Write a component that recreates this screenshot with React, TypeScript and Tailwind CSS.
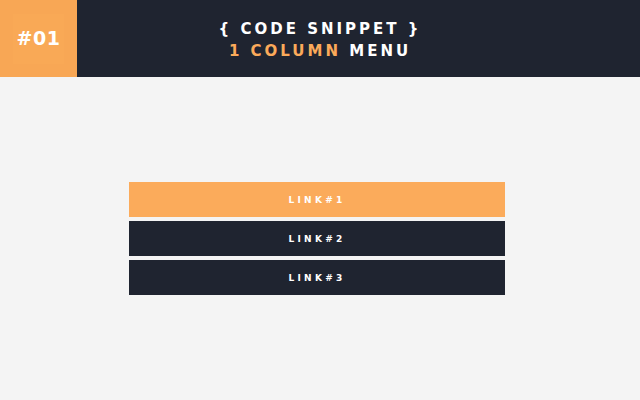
export default function App() {
  const links = ["LINK#1", "LINK#2", "LINK#3"];
  return (
    <div
      className="w-[640px] h-[400px] bg-[#f4f4f4] flex flex-col"
      style={{ fontFamily: '"DejaVu Sans", Verdana, sans-serif' }}
    >
      <header className="h-[77px] bg-[#1f2430] flex">
        <div className="w-[77px] h-[77px] bg-[#f8a755] flex items-center justify-center">
          <div className="w-[51px] h-[50px] bg-[#f9a956] flex items-center justify-center">
            <span className="text-white font-bold text-[19px] tracking-[0.5px]">#01</span>
          </div>
        </div>
        <div className="flex-1 flex flex-col items-center justify-center pr-[77px] leading-[22px] pt-[3px]">
          <div className="text-white font-bold text-[15px] tracking-[3px]">{"{ CODE SNIPPET }"}</div>
          <div className="font-bold text-[15px] tracking-[3px]">
            <span className="text-[#fbaa5a]">1 COLUMN</span>
            <span className="text-white"> MENU</span>
          </div>
        </div>
      </header>
      <nav className="ml-[129px] mt-[105px] w-[376px] flex flex-col gap-[4px]">
        {links.map((l, i) => (
          <a
            key={l}
            href="#"
            className={`h-[35px] pt-[2px] flex items-center justify-center text-white font-bold text-[9px] tracking-[3.3px] ${
              i === 0 ? "bg-[#fbab5b]" : "bg-[#1f2430]"
            }`}
          >
            {l}
          </a>
        ))}
      </nav>
    </div>
  );
}
